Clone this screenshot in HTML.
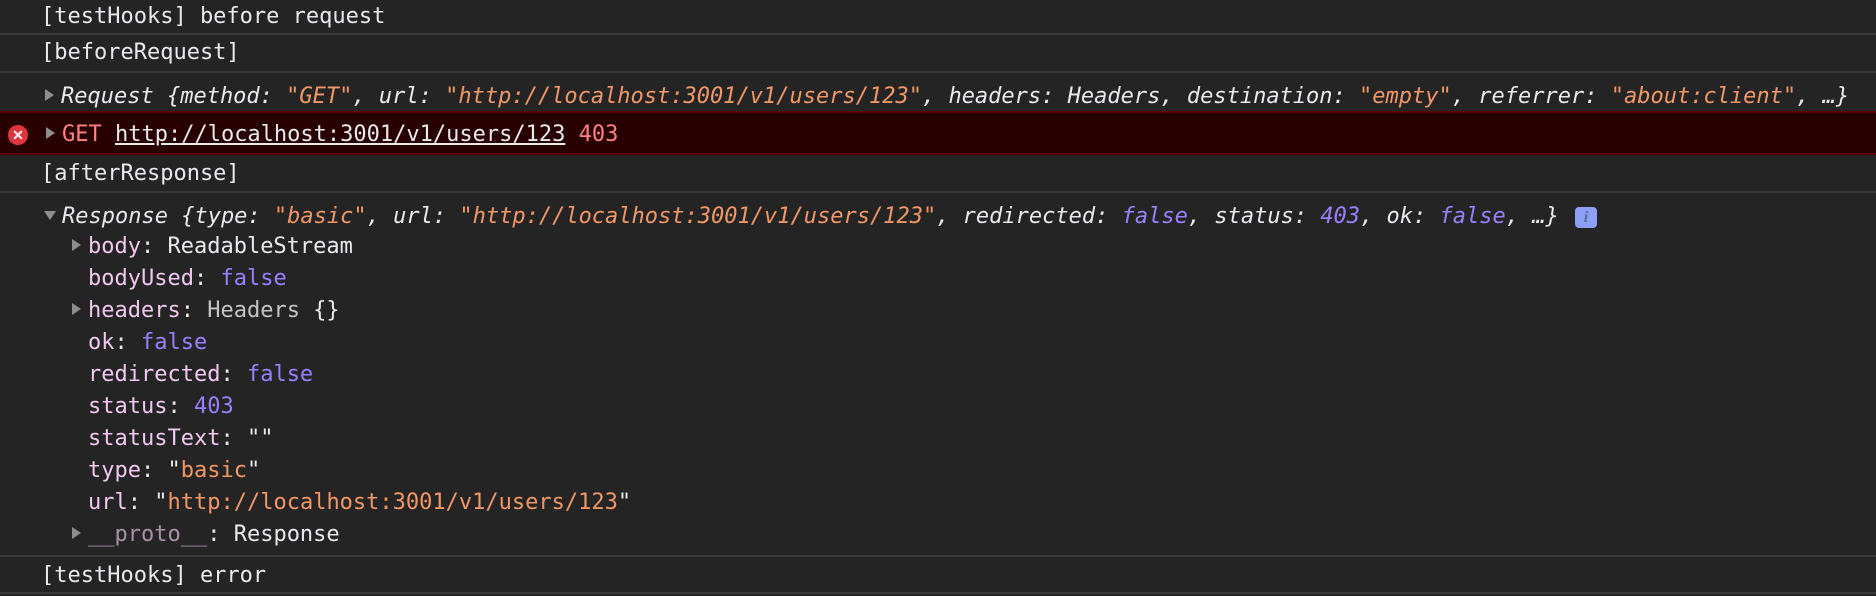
<!DOCTYPE html>
<html><head><meta charset="utf-8"><style>
html,body{margin:0;padding:0;background:#242424;width:1876px;height:596px;overflow:hidden}
body{font-family:"DejaVu Sans Mono","Liberation Mono",monospace;font-size:22px;color:#e8eaed;position:relative}
.l{position:absolute;left:0;white-space:pre;line-height:32px;height:32px}
.sep{position:absolute;left:0;width:1876px;height:2px;background:#3a3a3a}
.s{color:#f29766}.n{color:#9980ff}.k{color:#f0c8f0}.g{color:#c5c5c5}.p{color:#a98fa9}
.i{font-style:italic}
.tri{display:inline-block;width:0;height:0;border-top:6px solid transparent;border-bottom:6px solid transparent;border-left:9px solid #8e8e8e;vertical-align:middle;margin-right:7px;position:relative;top:-2px}
.trid{display:inline-block;width:0;height:0;border-left:6px solid transparent;border-right:6px solid transparent;border-top:9px solid #8e8e8e;vertical-align:middle;margin-right:6px;position:relative;top:-2px}
</style></head><body>
<div class="l" style="left:41px;top:1px">[testHooks] before request</div>
<div class="sep" style="top:33px"></div>
<div class="l" style="left:41px;top:37px">[beforeRequest]</div>
<div class="sep" style="top:71px"></div>
<div class="l i" style="left:45px;top:81px"><span class="tri"></span>Request {method: <span class="s">"GET"</span>, url: <span class="s">"http://localhost:3001/v1/users/123"</span>, headers: Headers, destination: <span class="s">"empty"</span>, referrer: <span class="s">"about:client"</span>, …}</div>
<div style="position:absolute;left:0;top:111px;width:1876px;height:40px;background:#290000;border-top:2px solid #5c0000;border-bottom:2px solid #5c0000"></div>
<div style="position:absolute;left:8px;top:125px;width:20px;height:20px;border-radius:50%;background:#e0353d;color:#fff;font:bold 14px 'Liberation Sans',sans-serif;text-align:center;line-height:20px">✕</div>
<div class="l" style="left:46px;top:119px;color:#ff8080"><span class="tri"></span>GET <span style="color:#e8eaed;text-decoration:underline">http://localhost:3001/v1/users/123</span> 403</div>
<div class="l" style="left:41px;top:158px">[afterResponse]</div>
<div class="sep" style="top:191px"></div>
<div class="l i" style="left:44px;top:201px"><span class="trid"></span>Response {type: <span class="s">"basic"</span>, url: <span class="s">"http://localhost:3001/v1/users/123"</span>, redirected: <span class="n">false</span>, status: <span class="n">403</span>, ok: <span class="n">false</span>, …}</div>
<div style="position:absolute;left:1575px;top:207px;width:22px;height:21px;border-radius:4px;background:#8ca0f5;color:#5a6a9a;font:italic bold 16px 'Liberation Serif',serif;text-align:center;line-height:21px">i</div>
<div class="l" style="left:72px;top:231px"><span class="tri"></span><span class="k">body</span>: ReadableStream</div>
<div class="l" style="left:88px;top:263px"><span class="k">bodyUsed</span>: <span class="n">false</span></div>
<div class="l" style="left:72px;top:295px"><span class="tri"></span><span class="k">headers</span>: <span class="g">Headers</span> {}</div>
<div class="l" style="left:88px;top:327px"><span class="k">ok</span>: <span class="n">false</span></div>
<div class="l" style="left:88px;top:359px"><span class="k">redirected</span>: <span class="n">false</span></div>
<div class="l" style="left:88px;top:391px"><span class="k">status</span>: <span class="n">403</span></div>
<div class="l" style="left:88px;top:423px"><span class="k">statusText</span>: ""</div>
<div class="l" style="left:88px;top:455px"><span class="k">type</span>: "<span class="s">basic</span>"</div>
<div class="l" style="left:88px;top:487px"><span class="k">url</span>: "<span class="s">http://localhost:3001/v1/users/123</span>"</div>
<div class="l" style="left:72px;top:519px"><span class="tri"></span><span class="p">__proto__</span>: Response</div>
<div class="sep" style="top:555px"></div>
<div class="l" style="left:41px;top:560px">[testHooks] error</div>
<div class="sep" style="top:592px"></div>
</body></html>
